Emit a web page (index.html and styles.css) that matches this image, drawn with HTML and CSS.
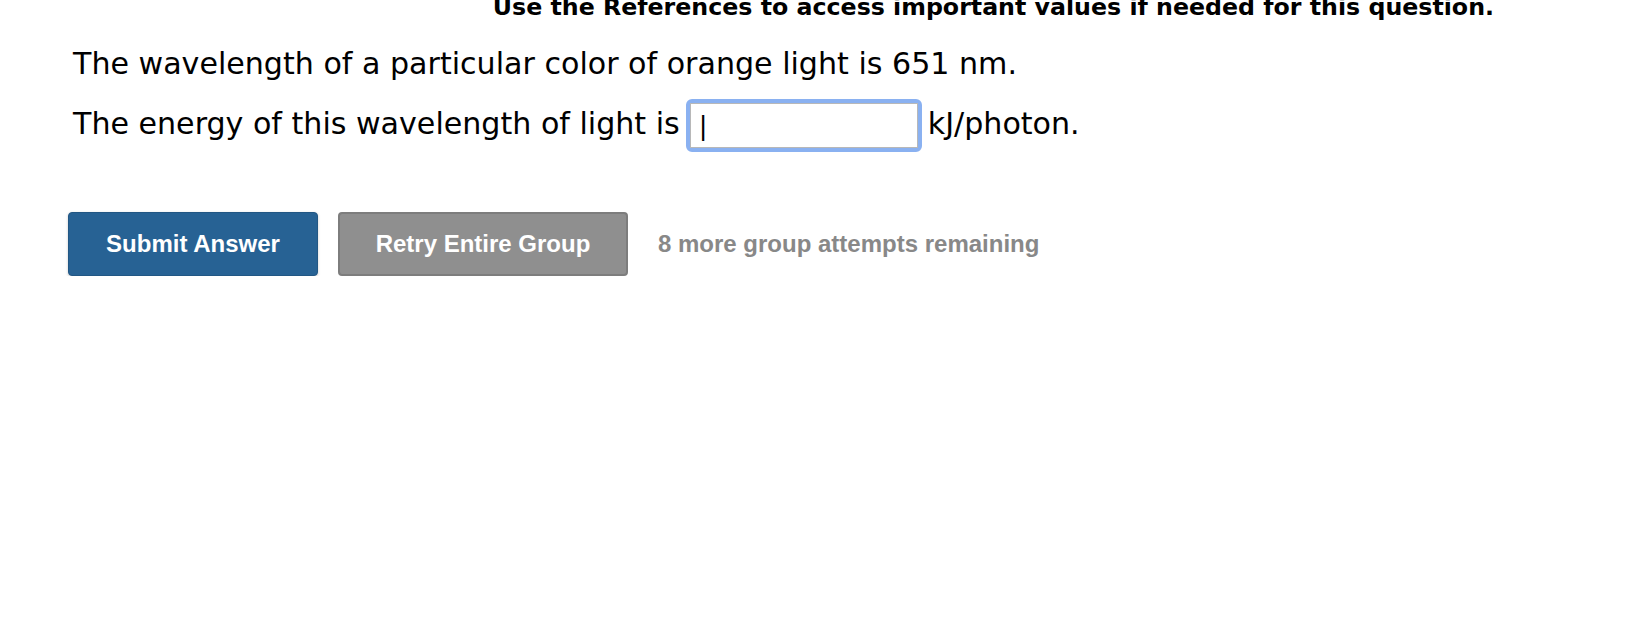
FILE: index.html
```html
<!DOCTYPE html>
<html lang="en">
  <head>
    <meta charset="UTF-8" />
    <title>Question</title>
    <link rel="stylesheet" href="styles.css">
  </head>
  <body>
    <div class="refs">Use the References to access important values if needed for this question.</div>

    <div class="question">
      <p>The wavelength of a particular color of orange light is 651 nm.</p>
      <p>The energy of this wavelength of light is<span class="answer-box"><input type="text" value="|" /></span>kJ/photon.</p>
    </div>

    <div class="actions">
      <button class="submit-button">Submit Answer</button>
      <button class="retry-button">Retry Entire Group</button>
      <span class="attempts">8 more group attempts remaining</span>
    </div>
  </body>
</html>
```

FILE: styles.css
```css
body {
  margin: 0;
  background-color: #fff;
  font-family: "DejaVu Sans", Verdana, sans-serif;
  color: #000;
}

.refs {
  font-weight: bold;
  font-size: 23.7px;
  line-height: 26px;
  margin-top: -6px;
  text-align: right;
  padding-right: 142px;
}

.question {
  padding-left: 73px;
  margin-top: 14px;
  font-size: 30.1px;
}

.question p {
  margin: 0;
  line-height: 60px;
}

.answer-box {
  display: inline-block;
  vertical-align: middle;
  margin: 0 6px 0 6px;
  border: 4px solid #8ab1f1;
  border-radius: 6px;
}

.answer-box input {
  display: block;
  width: 228px;
  height: 45px;
  box-sizing: border-box;
  border: 1px solid #b8b8b8;
  padding: 0 8px;
  font-family: "DejaVu Sans", Verdana, sans-serif;
  font-size: 26px;
  outline: none;
}

.actions {
  display: flex;
  align-items: center;
  gap: 20px;
  padding-left: 68px;
  margin-top: 58px;
  font-family: "Liberation Sans", Arial, sans-serif;
  font-weight: bold;
  font-size: 24px;
}

.actions button {
  height: 64px;
  border-radius: 4px;
  font-family: "Liberation Sans", Arial, sans-serif;
  font-weight: bold;
  font-size: 24px;
  color: #fff;
  cursor: pointer;
}

.submit-button {
  width: 250px;
  background-color: #276294;
  border: 1px solid #225784;
  box-shadow: 0 1px 3px rgba(0, 0, 0, 0.2);
}

.retry-button {
  width: 290px;
  background-color: #8f8f8f;
  border: 2px solid #7d7d7d;
}

.attempts {
  color: #888;
  margin-left: 10px;
}
```
